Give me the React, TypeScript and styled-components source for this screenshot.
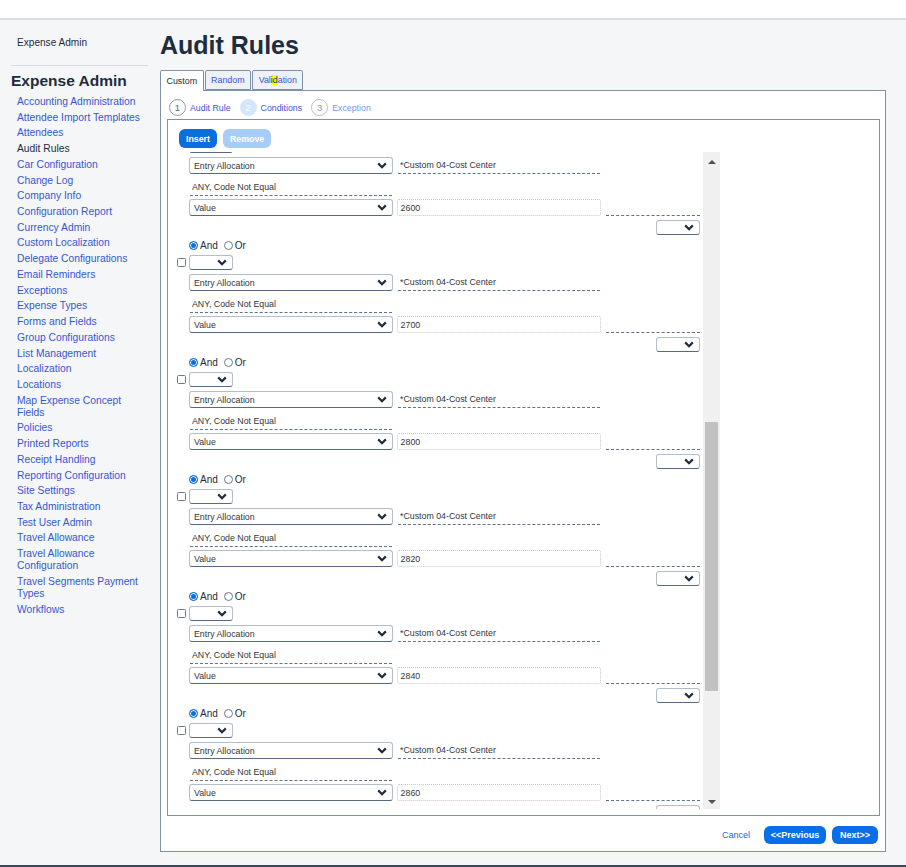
import { useLayoutEffect, useRef, useState } from 'react';
import styled, { createGlobalStyle } from 'styled-components';

const navItems = [
  'Accounting Administration',
  'Attendee Import Templates',
  'Attendees',
  'Audit Rules',
  'Car Configuration',
  'Change Log',
  'Company Info',
  'Configuration Report',
  'Currency Admin',
  'Custom Localization',
  'Delegate Configurations',
  'Email Reminders',
  'Exceptions',
  'Expense Types',
  'Forms and Fields',
  'Group Configurations',
  'List Management',
  'Localization',
  'Locations',
  'Map Expense Concept Fields',
  'Policies',
  'Printed Reports',
  'Receipt Handling',
  'Reporting Configuration',
  'Site Settings',
  'Tax Administration',
  'Test User Admin',
  'Travel Allowance',
  'Travel Allowance Configuration',
  'Travel Segments Payment Types',
  'Workflows',
];

const values = ['2100', '2200', '2300', '2400', '2500', '2600', '2700', '2800', '2820', '2840', '2860', '2880', '2900'];

const Chevron = () => (
  <svg width="10" height="7" viewBox="0 0 10 7">
    <path d="M1.2 1.4 L5 5.2 L8.8 1.4" fill="none" stroke="#1d2d3e" strokeWidth="2.2" />
  </svg>
);

const Condition = ({ value }: { value: string }) => (
  <Block>
    <AndOrRow>
      <Radio $checked />
      <RadioLabel>And</RadioLabel>
      <Radio />
      <RadioLabel>Or</RadioLabel>
    </AndOrRow>
    <CheckRow>
      <CheckBox />
      <SelectBox $width={44}>
        <span />
        <Chevron />
      </SelectBox>
    </CheckRow>
    <FieldRow>
      <SelectBox $width={204}>
        <span>Entry Allocation</span>
        <Chevron />
      </SelectBox>
      <DashedText $width={202}>*Custom 04-Cost Center</DashedText>
    </FieldRow>
    <OperatorText>ANY, Code Not Equal</OperatorText>
    <FieldRow $tight>
      <SelectBox $width={204}>
        <span>Value</span>
        <Chevron />
      </SelectBox>
      <ValueInput>{value}</ValueInput>
      <DashedText $width={94} />
    </FieldRow>
    <JoinRow>
      <SelectBox $width={44}>
        <span />
        <Chevron />
      </SelectBox>
    </JoinRow>
  </Block>
);

const RuleScroller = () => {
  const viewRef = useRef<HTMLDivElement>(null);
  const [thumb, setThumb] = useState({ top: 0, height: 0 });

  useLayoutEffect(() => {
    const el = viewRef.current;
    if (!el) return;
    el.scrollTop = 619;
    const track = el.clientHeight - 34;
    setThumb({
      top: (el.scrollTop / el.scrollHeight) * track,
      height: (el.clientHeight / el.scrollHeight) * track,
    });
  }, []);

  return (
    <Scroller>
      <Viewport ref={viewRef}>
        <ScrollContent>
          {values.map((v) => (
            <Condition key={v} value={v} />
          ))}
        </ScrollContent>
      </Viewport>
      <ScrollBar>
        <ArrowButton>
          <ArrowUp />
        </ArrowButton>
        <Track>
          <Thumb style={{ marginTop: thumb.top, height: thumb.height }} />
        </Track>
        <ArrowButton>
          <ArrowDown />
        </ArrowButton>
      </ScrollBar>
    </Scroller>
  );
};

export default function App() {
  return (
    <Page>
      <GlobalStyle />
      <TopBar />
      <Body>
        <Sidebar>
          <Crumb>Expense Admin</Crumb>
          <Divider />
          <SideHeading>Expense Admin</SideHeading>
          <NavList>
            {navItems.map((item) => (
              <NavItem key={item} $active={item === 'Audit Rules'}>
                {item}
              </NavItem>
            ))}
          </NavList>
        </Sidebar>
        <Main>
          <Title>Audit Rules</Title>
          <Tabs>
            <Tab $active>Custom</Tab>
            <Tab>Random</Tab>
            <Tab>
              Val<Mark>id</Mark>ation
            </Tab>
          </Tabs>
          <Panel>
            <Stepper>
              <Step>
                <StepCircle $kind="done">1</StepCircle>
                <StepLabel>Audit Rule</StepLabel>
              </Step>
              <Step>
                <StepCircle $kind="current">2</StepCircle>
                <StepLabel>Conditions</StepLabel>
              </Step>
              <Step>
                <StepCircle $kind="next">3</StepCircle>
                <StepLabel $muted>Exception</StepLabel>
              </Step>
            </Stepper>
            <RuleBox>
              <ButtonBar>
                <SmallButton>Insert</SmallButton>
                <SmallButton $disabled>Remove</SmallButton>
              </ButtonBar>
              <RuleScroller />
            </RuleBox>
            <Actions>
              <CancelLink>Cancel</CancelLink>
              <ActionButton $width={62}>&lt;&lt;Previous</ActionButton>
              <ActionButton $width={46}>Next&gt;&gt;</ActionButton>
            </Actions>
          </Panel>
        </Main>
      </Body>
      <Footer />
    </Page>
  );
}

const GlobalStyle = createGlobalStyle`
  html, body {
    margin: 0;
    padding: 0;
  }
  body {
    background: #f5f6f7;
    font-family: "Liberation Sans", Arial, sans-serif;
    color: #1d2d3e;
    overflow: hidden;
  }
  * {
    box-sizing: border-box;
  }
`;

const Page = styled.div`
  height: 867px;
  overflow: hidden;
  display: flex;
  flex-direction: column;
`;

const TopBar = styled.div`
  height: 20px;
  background: #fff;
  border-bottom: 2px solid #dadde1;
`;

const Body = styled.div`
  display: flex;
  height: 845px;
`;

const Footer = styled.div`
  height: 2px;
  background: #354a5f;
`;

const Sidebar = styled.aside`
  width: 150px;
  flex-shrink: 0;
  padding: 16px 2px 0 11px;
`;

const Crumb = styled.div`
  padding-left: 6px;
  font-size: 10.1px;
  line-height: 14px;
  color: #1d2d3e;
`;

const Divider = styled.div`
  margin-top: 15px;
  height: 1px;
  width: 137px;
  background: #d6dadf;
`;

const SideHeading = styled.h2`
  margin: 5px 0 0;
  font-size: 15.5px;
  line-height: 20px;
  font-weight: 700;
  color: #1d2d3e;
`;

const NavList = styled.nav`
  margin-top: 5px;
  padding-left: 6px;
  width: 137px;
  display: flex;
  flex-direction: column;
  gap: 3.73px;
`;

const NavItem = styled.a<{ $active?: boolean }>`
  font-size: 10.3px;
  line-height: 12px;
  color: ${(p) => (p.$active ? '#1d2d3e' : '#3556d4')};
  text-decoration: none;
  cursor: pointer;
`;

const Main = styled.main`
  flex: 1;
  padding: 10px 20px 0 10px;
  display: flex;
  flex-direction: column;
`;

const Title = styled.h1`
  margin: 0;
  font-size: 25px;
  line-height: 30px;
  font-weight: 700;
  color: #1d2d3e;
`;

const Tabs = styled.div`
  margin-top: 10px;
  display: flex;
  gap: 1px;
  height: 20px;
  position: relative;
  z-index: 1;
`;

const Tab = styled.div<{ $active?: boolean }>`
  height: ${(p) => (p.$active ? '21px' : '20px')};
  padding: 0 5.5px 1px;
  display: flex;
  align-items: center;
  font-size: 8.9px;
  color: ${(p) => (p.$active ? '#1d2d3e' : '#3556d4')};
  background: ${(p) => (p.$active ? '#fff' : '#eef1f5')};
  border: 1px solid #7f91a8;
  border-bottom: ${(p) => (p.$active ? 'none' : '1px solid #7f91a8')};
  border-radius: 2px 2px 0 0;
`;

const Mark = styled.span`
  background: #ffff00;
  color: #1d2d3e;
`;

const Panel = styled.section`
  border: 1px solid #7f91a8;
  background: #fff;
  padding: 0 5px 7px 6px;
  display: flex;
  flex-direction: column;
`;

const Stepper = styled.div`
  display: flex;
  align-items: center;
  gap: 9px;
  padding: 8px 0 3px 2px;
`;

const Step = styled.div`
  display: flex;
  align-items: center;
  gap: 4px;
`;

const StepCircle = styled.span<{ $kind: 'done' | 'current' | 'next' }>`
  width: 17px;
  height: 17px;
  border-radius: 50%;
  display: flex;
  align-items: center;
  justify-content: center;
  font-size: 9.5px;
  color: ${(p) => (p.$kind === 'current' ? '#fff' : p.$kind === 'done' ? '#556b82' : '#8a96a3')};
  background: ${(p) => (p.$kind === 'current' ? '#d3e7fc' : '#fff')};
  border: 1px solid ${(p) => (p.$kind === 'current' ? '#d3e7fc' : p.$kind === 'done' ? '#8d9aa8' : '#b5bfc9')};
`;

const StepLabel = styled.span<{ $muted?: boolean }>`
  font-size: 8.8px;
  color: ${(p) => (p.$muted ? '#6d9de6' : '#3556d4')};
`;

const RuleBox = styled.div`
  border: 1px solid #7f91a8;
  padding: 9px 0 6px 8px;
  display: flex;
  flex-direction: column;
`;

const ButtonBar = styled.div`
  display: flex;
  gap: 6px;
  padding-left: 3px;
`;

const SmallButton = styled.button<{ $disabled?: boolean }>`
  height: 19px;
  padding: 0 7px;
  border: none;
  border-radius: 6px;
  font-family: inherit;
  font-size: 8.8px;
  font-weight: 700;
  color: #fff;
  background: ${(p) => (p.$disabled ? '#a6cdf5' : '#0a6ee0')};
`;

const Scroller = styled.div`
  margin-top: 4px;
  width: 544px;
  height: 657px;
  display: flex;
`;

const Viewport = styled.div`
  flex: 1;
  overflow: hidden;
`;

const ScrollContent = styled.div`
  padding-top: 2px;
  padding-right: 3px;
`;

const ScrollBar = styled.div`
  width: 17px;
  background: #f0f0f0;
  display: flex;
  flex-direction: column;
`;

const ArrowButton = styled.div`
  height: 17px;
  display: flex;
  align-items: center;
  justify-content: center;
  padding-top: 2px;
`;

const ArrowUp = styled.span`
  width: 0;
  height: 0;
  border-left: 4px solid transparent;
  border-right: 4px solid transparent;
  border-bottom: 4px solid #505050;
`;

const ArrowDown = styled.span`
  width: 0;
  height: 0;
  border-left: 4px solid transparent;
  border-right: 4px solid transparent;
  border-top: 4px solid #505050;
`;

const Track = styled.div`
  flex: 1;
  padding: 0 2px;
`;

const Thumb = styled.div`
  background: #c1c1c1;
`;

const Block = styled.div`
  display: flex;
  flex-direction: column;
  height: 117px;
  font-size: 8.8px;
  color: #32363a;
`;

const AndOrRow = styled.div`
  height: 16px;
  padding-left: 13px;
  display: flex;
  align-items: center;
`;

const Radio = styled.span<{ $checked?: boolean }>`
  width: 9px;
  height: 9px;
  border-radius: 50%;
  border: 1px solid ${(p) => (p.$checked ? '#0a6ee0' : '#6a7b8c')};
  background: ${(p) => (p.$checked ? '#0a6ee0' : '#fff')};
  box-shadow: ${(p) => (p.$checked ? 'inset 0 0 0 1px #fff' : 'none')};
  margin-right: 2px;
`;

const RadioLabel = styled.span`
  font-size: 10px;
  color: #1d2d3e;
  margin-right: 6px;
`;

const CheckRow = styled.div`
  margin-top: 2px;
  height: 15px;
  display: flex;
  align-items: center;
  gap: 3px;
  padding-left: 1px;
`;

const CheckBox = styled.span`
  width: 9px;
  height: 9px;
  border: 1px solid #6a7b8c;
  border-radius: 1.5px;
  background: #fff;
`;

const SelectBox = styled.div<{ $width: number }>`
  width: ${(p) => p.$width}px;
  height: 100%;
  display: flex;
  align-items: center;
  justify-content: space-between;
  padding: 0 5px 0 4px;
  border: 1px solid #b4bec8;
  border-bottom-color: #556b82;
  border-radius: 3px;
  background: #fff;
  color: #32363a;
`;

const FieldRow = styled.div<{ $tight?: boolean }>`
  margin-top: ${(p) => (p.$tight ? '3px' : '4px')};
  height: 17px;
  padding-left: 13px;
  display: flex;
  gap: 4px;
`;

const DashedText = styled.span<{ $width: number }>`
  width: ${(p) => p.$width}px;
  margin-left: 1px;
  padding-left: 2px;
  display: flex;
  align-items: center;
  border-bottom: 1px dashed #5b738b;
  color: #32363a;
`;

const OperatorText = styled.div`
  margin: 4px 0 0 14px;
  width: 202px;
  height: 18px;
  padding-left: 2px;
  display: flex;
  align-items: center;
  border-bottom: 1px dashed #5b738b;
`;

const ValueInput = styled.div`
  width: 205px;
  padding-left: 3px;
  display: flex;
  align-items: center;
  border: 1px dotted #c2c9d1;
  border-radius: 2px;
  color: #32363a;
`;

const JoinRow = styled.div`
  margin-top: 4px;
  height: 15px;
  display: flex;
  justify-content: flex-end;
`;

const Actions = styled.div`
  margin-top: 10px;
  height: 18px;
  display: flex;
  justify-content: flex-end;
  align-items: center;
  gap: 6px;
  padding-right: 2px;
`;

const CancelLink = styled.a`
  font-size: 9px;
  color: #0a6ee0;
  margin-right: 8px;
  cursor: pointer;
`;

const ActionButton = styled.button<{ $width: number }>`
  width: ${(p) => p.$width}px;
  height: 18px;
  padding: 0;
  border: none;
  border-radius: 6px;
  background: #0a6ee8;
  color: #fff;
  font-family: inherit;
  font-size: 9px;
  font-weight: 700;
`;
